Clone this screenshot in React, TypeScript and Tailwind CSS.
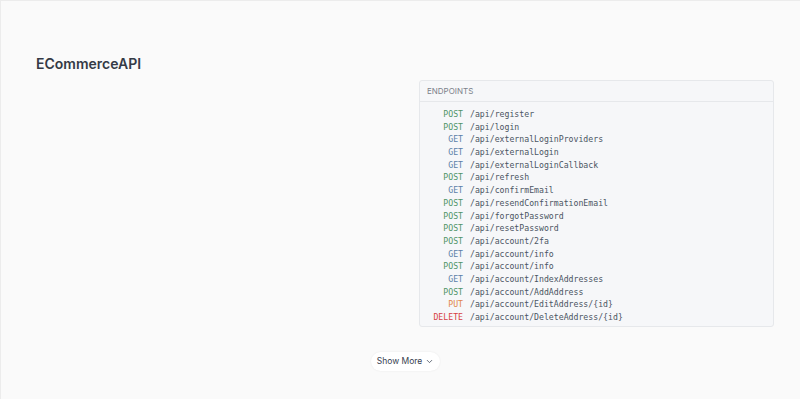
import React from "react";
import { ChevronDown } from "lucide-react";

type Endpoint = { method: "GET" | "POST" | "PUT" | "DELETE"; path: string };

const endpoints: Endpoint[] = [
  { method: "POST", path: "/api/register" },
  { method: "POST", path: "/api/login" },
  { method: "GET", path: "/api/externalLoginProviders" },
  { method: "GET", path: "/api/externalLogin" },
  { method: "GET", path: "/api/externalLoginCallback" },
  { method: "POST", path: "/api/refresh" },
  { method: "GET", path: "/api/confirmEmail" },
  { method: "POST", path: "/api/resendConfirmationEmail" },
  { method: "POST", path: "/api/forgotPassword" },
  { method: "POST", path: "/api/resetPassword" },
  { method: "POST", path: "/api/account/2fa" },
  { method: "GET", path: "/api/account/info" },
  { method: "POST", path: "/api/account/info" },
  { method: "GET", path: "/api/account/IndexAddresses" },
  { method: "POST", path: "/api/account/AddAddress" },
  { method: "PUT", path: "/api/account/EditAddress/{id}" },
  { method: "DELETE", path: "/api/account/DeleteAddress/{id}" },
];

const methodColor: Record<Endpoint["method"], string> = {
  GET: "text-[#5b80a8]",
  POST: "text-[#4f9467]",
  PUT: "text-[#e2854a]",
  DELETE: "text-[#d63f45]",
};

const EndpointRow = ({ method, path }: Endpoint) => (
  <div className="flex items-center h-[12.7px]">
    <span className={`w-[43px] text-right ${methodColor[method]}`}>{method}</span>
    <span className="ml-[7px] text-[#4b5563]">{path}</span>
  </div>
);

export default function App() {
  return (
    <div
      className="w-[800px] h-[399px] overflow-hidden bg-[#fafafa] border-t border-l border-[#ececec] flex flex-col"
      style={{ fontFamily: "Inter, 'Noto Sans', sans-serif" }}
    >
      <div className="pl-[35px] pt-[53px]">
        <h1 className="text-[14px] leading-[20px] font-semibold text-[#343a46]">
          ECommerceAPI
        </h1>
      </div>

      <div className="flex justify-end pr-[26px] mt-[6px]">
        <div className="w-[355px] rounded-[3px] border border-[#e6e8eb] bg-[#f6f7f9]">
          <div className="h-[21px] flex items-center px-[7px] border-b border-[#e6e8eb] text-[8px] text-[#7b818a] uppercase">
            Endpoints
          </div>
          <div
            className="pt-[6px] pb-[2px] text-[8.2px] leading-[12.7px]"
            style={{ fontFamily: "'DejaVu Sans Mono', 'Liberation Mono', monospace" }}
          >
            {endpoints.map((e, i) => (
              <EndpointRow key={i} method={e.method} path={e.path} />
            ))}
          </div>
        </div>
      </div>

      <div className="flex justify-center mt-[25px] pl-[10px]">
        <button className="h-[19px] px-[6px] rounded-full bg-white shadow-[0_0_2px_rgba(0,0,0,0.08)] flex items-center gap-[3px] text-[8.5px] text-[#374151]">
          Show More
          <ChevronDown size={9} strokeWidth={2} />
        </button>
      </div>
    </div>
  );
}
